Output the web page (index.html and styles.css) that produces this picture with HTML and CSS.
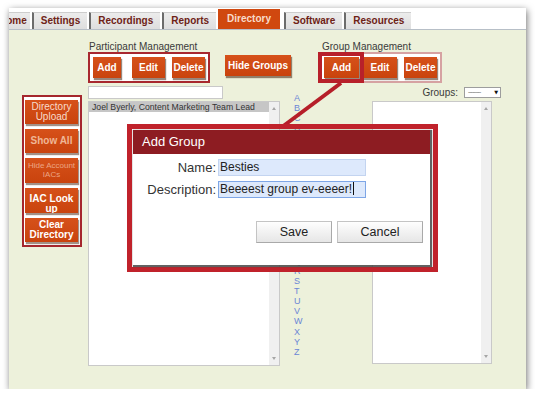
FILE: index.html
```html
<!DOCTYPE html>
<html lang="en">
<head>
    <meta charset="UTF-8">
    <meta name="viewport" content="width=device-width, initial-scale=1.0">
    <title>Directory</title>
    <link rel="stylesheet" href="styles.css">
</head>
<body>
    <div class="window">
        <div class="tabbar">
            <span class="tab home">Home</span>
            <span class="tab">Settings</span>
            <span class="tab">Recordings</span>
            <span class="tab">Reports</span>
            <span class="tab active">Directory</span>
            <span class="tab">Software</span>
            <span class="tab">Resources</span>
        </div>

        <div class="content">
            <div class="mgmt-row">
                <div class="mgmt">
                    <div class="mgmt-label">Participant Management</div>
                    <div class="btn-box participant-box">
                        <button class="btn p-add">Add</button>
                        <button class="btn p-edit">Edit</button>
                        <button class="btn p-delete">Delete</button>
                    </div>
                </div>
                <button class="btn hide-groups">Hide Groups</button>
                <div class="mgmt group-mgmt">
                    <div class="mgmt-label group-label">Group Management</div>
                    <div class="btn-box group-box">
                        <span class="callout-small"></span>
                        <button class="btn g-add">Add</button>
                        <button class="btn g-edit">Edit</button>
                        <button class="btn g-delete">Delete</button>
                    </div>
                </div>
            </div>

            <div class="main-row">
                <div class="side-panel">
                    <div class="side-btn upload">Directory<br>Upload</div>
                    <div class="side-btn show-all">Show All</div>
                    <div class="side-btn hide-iacs">Hide Account<br>IACs</div>
                    <div class="side-btn lookup">IAC Look<br>up</div>
                    <div class="side-btn clear">Clear<br>Directory</div>
                </div>

                <div class="participants">
                    <div class="search"></div>
                    <div class="listbox participant-list">
                        <div class="items">
                            <div class="item selected">Joel Byerly, Content Marketing Team Lead</div>
                        </div>
                        <div class="scroll"></div>
                    </div>
                </div>

                <div class="alphabet">
                    <span>A</span><span>B</span><span>C</span><span>D</span><span>E</span><span>F</span><span>G</span><span>H</span><span>I</span><span>J</span><span>K</span><span>L</span><span>M</span><span>N</span><span>O</span><span>P</span><span>Q</span><span>R</span><span>S</span><span>T</span><span>U</span><span>V</span><span>W</span><span>X</span><span>Y</span><span>Z</span>
                </div>

                <div class="groups">
                    <div class="groups-head">
                        <span class="groups-label">Groups:</span>
                        <span class="select"><span class="dashes">---------</span><span class="arrow">▼</span></span>
                    </div>
                    <div class="listbox group-list">
                        <div class="items"></div>
                        <div class="scroll"></div>
                    </div>
                </div>
            </div>
        </div>

        <svg class="pointer" width="517" height="381" viewBox="0 0 517 381">
            <line x1="332" y1="75" x2="273" y2="119" stroke="#b61f29" stroke-width="4"/>
        </svg>

        <div class="dialog-callout">
            <div class="dialog">
                <div class="dialog-title">Add Group</div>
                <div class="dialog-form">
                    <label class="field-label">Name:</label>
                    <div class="field name-field">Besties</div>
                    <label class="field-label">Description:</label>
                    <div class="field focused">Beeeest group ev-eeeer!<span class="caret"></span></div>
                </div>
                <div class="dialog-actions">
                    <button class="dlg-btn save">Save</button>
                    <button class="dlg-btn cancel">Cancel</button>
                </div>
            </div>
        </div>
    </div>
</body>
</html>
```

FILE: styles.css
```css
body {
    margin: 0;
    background: #fff;
    font-family: "Liberation Sans", Arial, sans-serif;
    color: #333;
}
.window {
    position: relative;
    width: 517px;
    height: 381px;
    margin: 8px 0 0 9px;
    background: #edf1db;
    box-shadow: 1px 2px 7px rgba(0, 0, 0, 0.55);
    overflow: hidden;
}

/* tabs */
.tabbar {
    display: flex;
    align-items: flex-end;
    gap: 2px;
    height: 21px;
    background: #fff;
    border-bottom: 1px solid #b7bfc7;
}
.tab {
    box-sizing: border-box;
    height: 17px;
    padding: 0 7px;
    background: linear-gradient(#ececec, #dedede);
    border-left: 2px solid #6c6c6c;
    border-top: 1px solid #cdcdcd;
    font-size: 10px;
    font-weight: bold;
    line-height: 16px;
    color: #6e2216;
    white-space: nowrap;
}
.tab.home {
    margin-left: -19px;
    padding: 0 3px 0 7px;
}
.tab.active {
    height: 20px;
    padding: 0 9px;
    border: none;
    background: #d0480f;
    color: #f8dccb;
    line-height: 20px;
    margin-right: 2px;
}

/* management buttons */
.content {
    padding: 12px 0 0 13px;
}
.mgmt-row {
    display: flex;
    align-items: flex-start;
    margin-left: 66px;
}
.mgmt-label {
    font-size: 10px;
    line-height: 10px;
    color: #3a3a3a;
    margin-left: 1px;
    white-space: nowrap;
}
.group-label {
    margin-left: 4px;
}
.btn-box {
    position: relative;
    display: flex;
    align-items: center;
    box-sizing: border-box;
    height: 31px;
    padding: 0 3px;
    border: 2px solid #a8282f;
    background: #fff;
}
.participant-box {
    width: 122px;
}
.group-box {
    width: 124px;
    border-color: #d6a2a2;
    padding-left: 4px;
}
.callout-small {
    position: absolute;
    left: -2px;
    top: -2px;
    width: 46px;
    height: 31px;
    box-sizing: border-box;
    border: 4px solid #b8202a;
}
.btn {
    box-sizing: border-box;
    height: 21px;
    padding: 0;
    border: none;
    background: linear-gradient(#d6511a, #c9430d);
    color: #fff;
    font-family: "Liberation Sans", Arial, sans-serif;
    font-size: 10px;
    font-weight: bold;
    box-shadow: 1px 2px 1px rgba(70, 35, 15, 0.55);
    white-space: nowrap;
}
.p-add { width: 28px; }
.p-edit { width: 33px; margin-left: 11px; }
.p-delete { width: 33px; margin-left: 7px; }
.g-add { width: 35px; }
.g-edit { width: 34px; margin-left: 4px; }
.g-delete { width: 33px; margin-left: 7px; }
.hide-groups {
    width: 66px;
    margin: 13px 0 0 15px;
}
.group-mgmt {
    margin-left: 27px;
}

/* main area */
.main-row {
    display: flex;
    align-items: flex-start;
    margin-top: 3px;
}
.side-panel {
    display: flex;
    flex-direction: column;
    gap: 5px;
    box-sizing: border-box;
    width: 60px;
    height: 152px;
    margin-top: 9px;
    padding: 3px 2px 3px 1px;
    border: 2px solid #a5272d;
    background: #fff;
}
.side-btn {
    display: flex;
    flex-direction: column;
    justify-content: center;
    box-sizing: border-box;
    width: 53px;
    height: 24px;
    background: linear-gradient(#d6511a, #c9430d);
    box-shadow: 1px 2px 1px rgba(70, 35, 15, 0.5);
    color: #fff;
    font-size: 10px;
    line-height: 10px;
    text-align: center;
}
.side-btn.upload {
    color: #f7dccb;
}
.side-btn.show-all {
    font-weight: bold;
    color: #efb696;
}
.side-btn.hide-iacs {
    height: 26px;
    font-size: 8px;
    line-height: 9px;
    color: #eca585;
}
.side-btn.lookup {
    height: 25px;
    justify-content: flex-start;
    padding-top: 6px;
    overflow: hidden;
    font-weight: bold;
}
.side-btn.clear {
    font-weight: bold;
}

.participants {
    width: 192px;
    margin-left: 6px;
}
.search {
    box-sizing: border-box;
    width: 135px;
    height: 13px;
    border: 1px solid #c9c9c9;
    background: #fff;
}
.listbox {
    display: flex;
    box-sizing: border-box;
    border: 1px solid #c9c9c9;
    background: #fff;
}
.participant-list {
    height: 265px;
    margin-top: 2px;
}
.items {
    flex: 1;
}
.item {
    height: 10px;
    padding-left: 3px;
    font-size: 8.7px;
    line-height: 10px;
    color: #333;
    white-space: nowrap;
}
.item.selected {
    background: #c6c6c6;
}
.scroll {
    display: flex;
    flex-direction: column;
    justify-content: space-between;
    align-items: center;
    width: 10px;
    padding: 5px 0;
    background: #f0f0f0;
    box-sizing: border-box;
}
.scroll::before,
.scroll::after {
    content: "";
    border-left: 2.5px solid transparent;
    border-right: 2.5px solid transparent;
}
.scroll::before {
    border-bottom: 3px solid #a6a6a6;
}
.scroll::after {
    border-top: 3px solid #a6a6a6;
}

.alphabet {
    display: flex;
    flex-direction: column;
    width: 92px;
    box-sizing: border-box;
    padding: 7px 0 0 14px;
    font-size: 9px;
    line-height: 10.16px;
    color: #6b86d6;
}

.groups {
    width: 133px;
}
.groups-head {
    display: flex;
    justify-content: flex-end;
    align-items: center;
    gap: 6px;
    height: 12px;
    padding-right: 4px;
}
.groups-label {
    font-size: 10px;
    color: #3a3a3a;
}
.select {
    display: flex;
    justify-content: space-between;
    align-items: center;
    box-sizing: border-box;
    width: 37px;
    height: 11px;
    padding: 0 2px 0 3px;
    border: 1px solid #9d9d9d;
    background: #fff;
    color: #333;
}
.dashes {
    font-size: 6px;
    letter-spacing: -0.6px;
}
.arrow {
    font-family: "DejaVu Sans", sans-serif;
    font-size: 5px;
    color: #111;
}
.group-list {
    width: 120px;
    height: 263px;
    margin-top: 3px;
}

/* callout pointer and dialog */
.pointer {
    position: absolute;
    left: 0;
    top: 0;
}
.dialog-callout {
    position: absolute;
    left: 118px;
    top: 116px;
    box-sizing: border-box;
    width: 311px;
    height: 148px;
    padding: 1px 3px 2px 1px;
    border: 5px solid #c0222b;
}
.dialog {
    height: 135px;
    background: #fff;
    box-shadow: 1px 1px 1px 1px rgba(70, 70, 70, 0.85);
}
.dialog-title {
    height: 24px;
    padding-left: 9px;
    background: #8d1c22;
    color: #fff;
    font-size: 13px;
    line-height: 24px;
}
.dialog-form {
    display: grid;
    grid-template-columns: 83px 148px;
    column-gap: 2px;
    row-gap: 5px;
    padding-top: 5px;
}
.field-label {
    font-size: 13px;
    line-height: 17px;
    text-align: right;
    color: #333;
}
.field {
    box-sizing: border-box;
    height: 17px;
    padding-left: 1px;
    background: #dde9fc;
    border: 1px solid #c3d4f0;
    font-size: 12px;
    line-height: 15px;
    color: #222;
    white-space: nowrap;
}
.field.focused {
    border-color: #7ea6e6;
}
.caret {
    display: inline-block;
    width: 1px;
    height: 13px;
    margin-left: 1px;
    vertical-align: -2px;
    background: #111;
}
.dialog-actions {
    display: flex;
    justify-content: flex-end;
    gap: 5px;
    margin-top: 23px;
    padding-right: 7px;
}
.dlg-btn {
    height: 22px;
    padding: 0;
    border: 1px solid #c4c4c4;
    border-right-color: #a9a9a9;
    border-bottom-color: #a9a9a9;
    background: linear-gradient(#fefefe, #e6e6e6);
    color: #222;
    font-family: "Liberation Sans", Arial, sans-serif;
    font-size: 12.5px;
}
.save { width: 76px; }
.cancel { width: 86px; }
```
